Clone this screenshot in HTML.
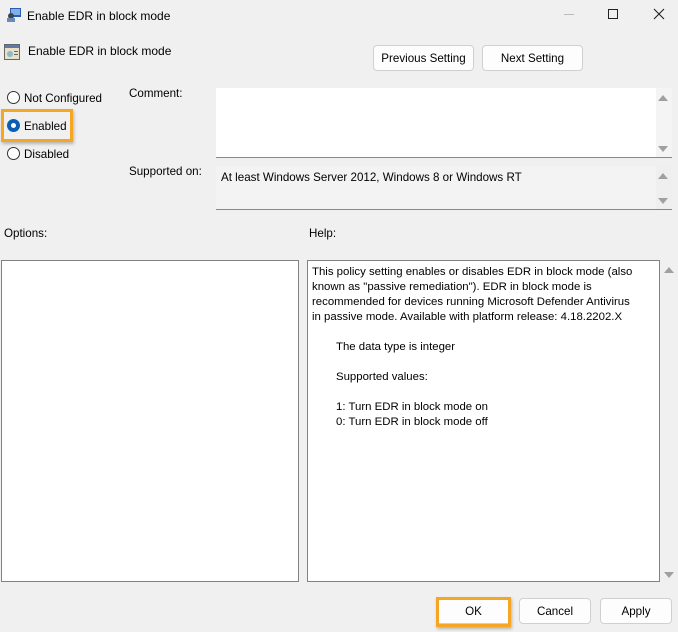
<!DOCTYPE html>
<html><head><style>
*{margin:0;padding:0;box-sizing:border-box}
body{width:678px;height:632px;background:#f0f0f0;font-family:"Liberation Sans",sans-serif;font-size:11.6px;color:#000;position:relative;overflow:hidden}
.a{position:absolute;white-space:nowrap}
.btn{position:absolute;background:#fdfdfd;border:1px solid #d0d0d0;border-radius:4px;text-align:center;line-height:25px;height:26px}
.box{position:absolute;background:#fff}
.radio{position:absolute;width:13px;height:13px;border:1px solid #333;border-radius:50%;background:#fff}
.tri{position:absolute;width:0;height:0;border-left:5px solid transparent;border-right:5px solid transparent}
.up{border-bottom:6px solid #a0a0a0}
.dn{border-top:6px solid #a0a0a0}
</style></head><body>
<svg class="a" style="left:6px;top:7px" width="16" height="16" viewBox="0 0 16 16"><rect x="4" y="1" width="11" height="9" fill="#2a5db0"/><rect x="5" y="2" width="9" height="6" fill="#7fb0e8"/><circle cx="5" cy="9" r="3" fill="#444"/><rect x="1" y="11" width="8" height="4" fill="#6a8ab8"/></svg>
<div class="a" style="left:27px;top:9px;font-size:12px">Enable EDR in block mode</div>
<div class="a" style="left:564px;top:14px;width:10px;height:1px;background:#bbb"></div>
<div class="a" style="left:608px;top:9px;width:10px;height:10px;border:1px solid #222"></div>
<svg class="a" style="left:653px;top:8px" width="12" height="12"><path d="M1 1L11 11M11 1L1 11" stroke="#222" stroke-width="1.1"/></svg>
<svg class="a" style="left:4px;top:44px" width="16" height="16" viewBox="0 0 16 16"><rect x="0.5" y="0.5" width="15" height="15" fill="#e8e0c8" stroke="#666"/><rect x="1" y="1" width="14" height="3" fill="#5a7ab0"/><circle cx="6" cy="10" r="3" fill="#8bc"/><rect x="10" y="7" width="4" height="1" fill="#666"/><rect x="10" y="10" width="4" height="1" fill="#666"/></svg>
<div class="a" style="left:28px;top:44px;font-size:12px">Enable EDR in block mode</div>
<div class="btn" style="left:373px;top:45px;width:101px">Previous Setting</div>
<div class="btn" style="left:482px;top:45px;width:101px">Next Setting</div>
<div class="radio" style="left:7px;top:91px"></div>
<div class="a" style="left:24px;top:92px">Not Configured</div>
<div class="a" style="left:1px;top:109px;width:72px;height:33px;border:3px solid #f5a623;box-shadow:1px 2px 3px rgba(0,0,0,.25)"></div>
<div class="radio" style="left:7px;top:119px;background:#fff;border:4px solid #0a5fb4"></div>
<div class="a" style="left:24px;top:120px">Enabled</div>
<div class="radio" style="left:7px;top:147px"></div>
<div class="a" style="left:24px;top:148px">Disabled</div>
<div class="a" style="left:129px;top:87px">Comment:</div>
<div class="box" style="left:216px;top:88px;width:440px;height:70px;border-bottom:1px solid #888"></div>
<div class="a" style="left:656px;top:88px;width:16px;height:70px;background:#f4f4f4;border-bottom:1px solid #888"></div>
<div class="tri up" style="left:658px;top:95px"></div>
<div class="tri dn" style="left:658px;top:146px"></div>
<div class="a" style="left:129px;top:165px">Supported on:</div>
<div class="a" style="left:216px;top:166px;width:440px;height:44px;background:#f3f3f3;border-bottom:1px solid #888"></div>
<div class="a" style="left:656px;top:166px;width:16px;height:44px;background:#efefef;border-bottom:1px solid #888"></div>
<div class="a" style="left:221px;top:171px">At least Windows Server 2012, Windows 8 or Windows RT</div>
<div class="tri up" style="left:658px;top:173px"></div>
<div class="tri dn" style="left:658px;top:198px"></div>
<div class="a" style="left:4px;top:227px">Options:</div>
<div class="a" style="left:309px;top:227px">Help:</div>
<div class="box" style="left:1px;top:260px;width:298px;height:322px;border:1px solid #828282"></div>
<div class="box" style="left:307px;top:260px;width:353px;height:322px;border:1px solid #828282"></div>
<div class="tri up" style="left:664px;top:267px"></div>
<div class="tri dn" style="left:664px;top:572px"></div>
<div class="a" style="left:312px;top:265px;line-height:15px;font-size:11.4px">This policy setting enables or disables EDR in block mode (also<br>known as "passive remediation"). EDR in block mode is<br>recommended for devices running Microsoft Defender Antivirus<br>in passive mode. Available with platform release: 4.18.2202.X</div>
<div class="a" style="left:336px;top:340px;line-height:15px;font-size:11.4px">The data type is integer<br><br>Supported values:<br><br>1: Turn EDR in block mode on<br>0: Turn EDR in block mode off</div>
<div class="btn" style="left:438px;top:599px;width:71px;height:25px;border-radius:0"></div>
<div class="a" style="left:436px;top:597px;width:75px;height:30px;border:3px solid #f5a623;box-shadow:1px 2px 3px rgba(0,0,0,.25)"></div>
<div class="a" style="left:436px;top:605px;width:75px;text-align:center">OK</div>
<div class="btn" style="left:519px;top:598px;width:72px">Cancel</div>
<div class="btn" style="left:600px;top:598px;width:72px">Apply</div>
</body></html>
